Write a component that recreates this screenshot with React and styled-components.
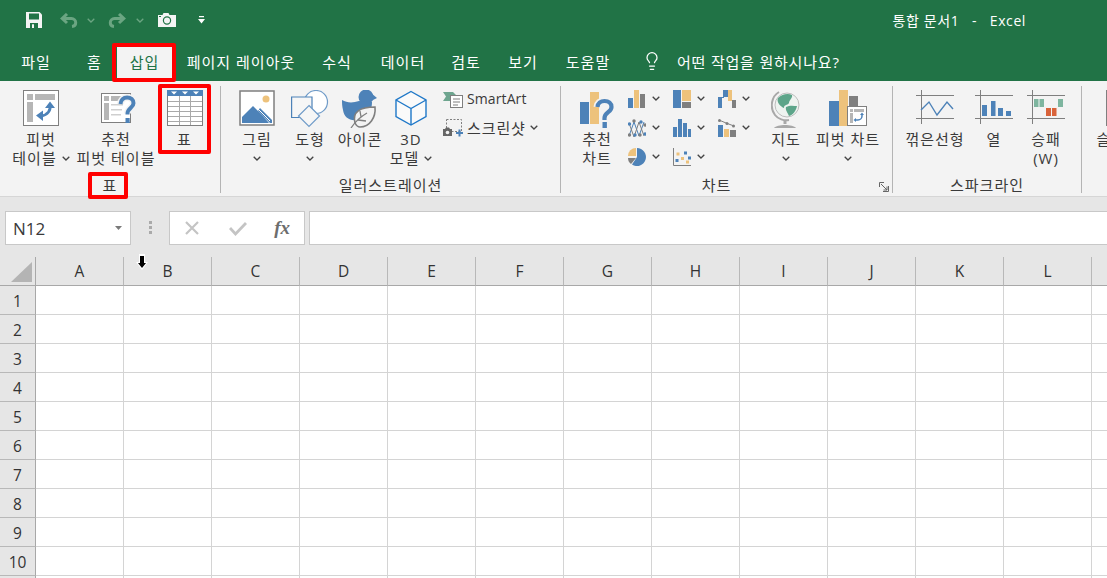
import React from "react";
import styled, { createGlobalStyle } from "styled-components";
import { Lightbulb } from "lucide-react";

const BLUE = "#4d82b8";
const YELLOW = "#edc27c";
const GRAY = "#7f7f7f";
const LIGHT = "#b6b6b6";

const GlobalStyle = createGlobalStyle`
  html, body {
    margin: 0;
    height: 100%;
    overflow: hidden;
    background: #fff;
  }
  * {
    box-sizing: border-box;
  }
  svg {
    display: block;
    flex: none;
  }
`;

const Page = styled.div`
  width: 1107px;
  height: 578px;
  overflow: hidden;
  font-family: "Open Sans", "Noto Sans CJK KR", sans-serif;
  color: #3a3a3a;
`;

const TitleBar = styled.div`
  height: 43px;
  background: #217346;
  display: flex;
  align-items: center;
  padding: 0 0 3px 26px;
  color: #fff;
`;

const QatSlot = styled.span`
  margin-left: ${props => props.$gap || 0}px;
`;

const WindowTitle = styled.div`
  margin-left: auto;
  margin-right: 81px;
  font-size: 14px;
  letter-spacing: 0.6px;
  white-space: pre;
`;

const TabBar = styled.div`
  height: 38px;
  background: #217346;
  display: flex;
  align-items: stretch;
`;

const Tab = styled.div`
  position: relative;
  width: ${props => props.$w}px;
  padding-bottom: 2px;
  display: flex;
  align-items: center;
  justify-content: center;
  font-size: 15px;
  letter-spacing: 1px;
  white-space: nowrap;
  color: ${props => (props.$active ? "#217346" : "#fff")};
  background: ${props => (props.$active ? "#f3f3f3" : "transparent")};
`;

const TellMe = styled.div`
  display: flex;
  align-items: center;
  color: #fff;
  font-size: 15px;
  letter-spacing: 0.8px;
  margin-left: 22px;
  padding-bottom: 2px;
  gap: 15px;
`;

const Mark = styled.span`
  position: absolute;
  border: 4px solid #ff0000;
  border-radius: 2px;
  pointer-events: none;
`;

const TabMark = styled(Mark)`
  top: 0;
  bottom: -1px;
  left: -5px;
  right: -4px;
`;

const ButtonMark = styled(Mark)`
  top: -6px;
  bottom: -5px;
  left: 0;
  right: 0;
`;

const LabelMark = styled(Mark)`
  top: -4px;
  bottom: -3px;
  left: 88px;
  width: 40px;
`;

const Ribbon = styled.div`
  height: 116px;
  background: #f3f3f3;
  border-bottom: 1px solid #d6d6d6;
  display: flex;
`;

const Group = styled.div`
  position: relative;
  width: ${props => props.$w}px;
  flex: none;
  display: flex;
  flex-direction: column;
`;

const GroupBody = styled.div`
  height: 95px;
  padding: 9px 0 0 ${props => props.$pad || 0}px;
  display: flex;
  align-items: flex-start;
`;

const GroupLabel = styled.div`
  position: relative;
  height: 20px;
  line-height: 19px;
  padding-right: ${props => props.$inset || 0}px;
  text-align: center;
  font-size: 15px;
  letter-spacing: 1px;
`;

const Separator = styled.div`
  width: 1px;
  height: 107px;
  flex: none;
  margin-top: 5px;
  background: #b4b4b4;
`;

const BigButton = styled.div`
  position: relative;
  width: ${props => props.$w}px;
  flex: none;
  margin-left: ${props => props.$gap || 0}px;
  display: flex;
  flex-direction: column;
  align-items: center;
`;

const IconSlot = styled.div`
  height: 36px;
  margin: 0 0 4px ${props => props.$shift || 0}px;
  display: flex;
  justify-content: center;
`;

const Line = styled.div`
  height: 19px;
  line-height: 19px;
  font-size: 15px;
  letter-spacing: 1px;
  white-space: nowrap;
  display: flex;
  align-items: center;
  gap: 5px;
`;

const SmallColumn = styled.div`
  margin: -6px 0 0 ${props => props.$gap || 0}px;
  flex: none;
`;

const SmallRow = styled.div`
  height: 29px;
  display: flex;
  align-items: center;
  gap: 4px;
  font-size: ${props => (props.$latin ? "14px" : "15px")};
  letter-spacing: ${props => (props.$latin ? "0.1px" : "0.9px")};
  white-space: nowrap;
`;

const ChartGrid = styled.div`
  margin: -6px 0 0 5px;
  display: grid;
  grid-template-columns: repeat(3, 45px);
  grid-auto-rows: 29px;
  flex: none;
`;

const ChartCell = styled.div`
  display: flex;
  align-items: center;
  gap: 6px;
`;

const Launcher = styled.svg`
  position: absolute;
  right: 3px;
  bottom: 4px;
`;

const FormulaBar = styled.div`
  height: 60px;
  background: #e6e6e6;
  padding: 14px 0 0 5px;
  display: flex;
  align-items: flex-start;
`;

const NameBox = styled.div`
  width: 126px;
  height: 34px;
  background: #fff;
  border: 1px solid #c8c8c8;
  display: flex;
  align-items: center;
  justify-content: space-between;
  padding: 0 8px 0 7px;
  font-size: 17px;
`;

const Grip = styled.div`
  width: 38px;
  height: 33px;
  display: flex;
  align-items: center;
  justify-content: center;
`;

const FormulaButtons = styled.div`
  width: 136px;
  height: 34px;
  background: #fff;
  border: 1px solid #c8c8c8;
  display: flex;
  align-items: center;
  justify-content: space-between;
  padding: 0 14px 0 13px;
`;

const FxLabel = styled.span`
  font-family: "Liberation Serif", serif;
  font-style: italic;
  font-weight: bold;
  font-size: 19px;
  color: #6d6d6d;
`;

const FormulaInput = styled.div`
  flex: 1;
  height: 34px;
  margin-left: 4px;
  background: #fff;
  border: 1px solid #c8c8c8;
  border-right: 0;
`;

const Sheet = styled.div`
  position: relative;
  display: grid;
  grid-template-columns: 36px repeat(12, 88px) 88px;
  grid-auto-rows: 29px;
  background: #fff;
`;

const Corner = styled.div`
  background: #e6e6e6;
  border-right: 1px solid #a8a8a8;
  border-bottom: 1px solid #a8a8a8;
  display: flex;
  align-items: flex-end;
  justify-content: flex-end;
  padding: 0 3px 3px 0;
`;

const ColumnHead = styled.div`
  background: #e6e6e6;
  border-right: 1px solid #b8b8b8;
  border-bottom: 1px solid #a8a8a8;
  display: flex;
  align-items: center;
  justify-content: center;
  font-size: 15.5px;
  color: #333;
`;

const RowHead = styled.div`
  background: #e6e6e6;
  border-right: 1px solid #a8a8a8;
  border-bottom: 1px solid #b8b8b8;
  padding-top: 1px;
  display: flex;
  align-items: center;
  justify-content: center;
  font-size: 15.5px;
  color: #333;
`;

const Cell = styled.div`
  border-right: 1px solid #d4d4d4;
  border-bottom: 1px solid #d4d4d4;
`;

const Pointer = styled.svg`
  position: absolute;
  left: 136px;
  top: -3px;
`;

const Chevron = ({ color = "#444" }) => (
  <svg width="8" height="5" viewBox="0 0 8 5">
    <path d="M.7.7 4 4 7.3.7" fill="none" stroke={color} strokeWidth="1.3" />
  </svg>
);

const SaveIcon = () => (
  <svg width="16" height="16" viewBox="0 0 16 16">
    <path d="M0 0h13.5L16 2.5V16H0z" fill="#f4f4f4" />
    <path d="M3 1.5h10v6H3z" fill="#217346" />
    <path d="M4 11h8v5H4z" fill="#217346" />
    <path d="M6 12.2h2V16H6z" fill="#f4f4f4" />
  </svg>
);

const UndoIcon = ({ flip }) => (
  <svg width="18" height="15" viewBox="0 0 18 15">
    <g transform={flip ? "translate(18 0) scale(-1 1)" : undefined}>
      <path
        d="M7 1 2.200 5.500 7 10M2.200 5.500h9.300a4.200 4.200 0 0 1 4.200 4.200c0 2-1.500 3.600-3.700 3.800"
        fill="none"
        stroke="#6ba582"
        strokeWidth="3"
      />
    </g>
  </svg>
);

const CameraIcon = () => (
  <svg width="18" height="14" viewBox="0 0 18 14">
    <path d="M0 2h4.500l1-2h5l1 2H18v12H0z" fill="#f4f4f4" />
    <circle cx="9" cy="7.500" r="3.600" fill="none" stroke="#217346" strokeWidth="1.200" />
    <path d="M1 3h2v1H1z" fill="#217346" />
  </svg>
);

const CustomizeIcon = () => (
  <svg width="7" height="8" viewBox="0 0 7 8">
    <path d="M1 0h5v1.200H1zM0 3h7L3.500 7.500z" fill="#fff" />
  </svg>
);

const PivotIcon = () => (
  <svg width="36" height="36" viewBox="0 0 36 36">
    <rect x="0.500" y="0.500" width="35" height="35" fill="#fff" stroke={GRAY} />
    <path d="M4 4h6v6H4zM12 4h20v6H12zM4 12h6v20H4z" fill={LIGHT} />
    <path
      d="M27 15c1 5-2 10-9 11"
      fill="none"
      stroke={BLUE}
      strokeWidth="2.800"
    />
    <path d="M22 18l5-6.500 5 6.500zM20 20.500l-7 5 7 5.500z" fill={BLUE} />
  </svg>
);

const RecommendPivotIcon = () => (
  <svg width="36" height="36" viewBox="0 0 36 36">
    <rect x="0.500" y="3.500" width="29" height="29" fill="#fff" stroke={GRAY} />
    <path d="M3 6h5v5H3zM10 6h17v5H10zM3 13h5v17H3z" fill={LIGHT} />
    <path d="M10 14h12v1.500H10zM10 19h11v1.500H10zM10 24h10v1.500H10z" fill="#cfcfcf" />
    <path
      d="M19.500 14c.3-4 3-6.500 6.600-6.500 3.800 0 6.400 2.300 6.400 5.700 0 4.800-6 5-6 10.300"
      fill="none"
      stroke="#f3f3f3"
      strokeWidth="7"
    />
    <path
      d="M19.500 14c.3-4 3-6.500 6.600-6.500 3.800 0 6.400 2.300 6.400 5.700 0 4.800-6 5-6 10.300v1"
      fill="none"
      stroke={BLUE}
      strokeWidth="4"
    />
    <path d="M24.500 28h4.200v5h-4.200z" fill={BLUE} />
  </svg>
);

const TableIcon = () => (
  <svg width="36" height="36" viewBox="0 0 36 36">
    <rect x="0.500" y="0.500" width="35" height="35" fill="#fff" stroke={GRAY} />
    <path d="M0 0h36v6H0z" fill={BLUE} />
    <path d="M4 1.500h6l-3 3zM15 1.500h6l-3 3zM26 1.500h6l-3 3z" fill="#fff" />
    <path
      d="M12.500 6v29M23.500 6v29M1 11.500h34M1 16.500h34M1 21.500h34M1 26.500h34M1 31.500h34"
      stroke="#a9a9a9"
      fill="none"
    />
  </svg>
);

const PictureIcon = () => (
  <svg width="36" height="36" viewBox="0 0 36 36">
    <rect x="1" y="1" width="34" height="34" fill="#fff" stroke={GRAY} strokeWidth="1.500" />
    <circle cx="27" cy="9" r="3.500" fill={YELLOW} />
    <path d="M3 33V27L14 16l10 10 6 7z" fill={BLUE} />
    <path d="M21 18l12 12v3h-2L19 21z" fill={BLUE} />
    <path d="M17.500 17.500 31 31" stroke="#fff" strokeWidth="1" />
  </svg>
);

const ShapesIcon = () => (
  <svg width="38" height="38" viewBox="0 0 38 38">
    <circle cx="25" cy="12" r="11.500" fill="#fff" stroke="#6f9bc8" strokeWidth="1.200" />
    <path d="M.6 7H21v20.500H.6z" fill="#f6f6f6" stroke={BLUE} strokeWidth="1.200" />
    <path d="M18 15.500 28.500 26 18 36.500 7.500 26z" fill="#f6f6f6" stroke="#6f9bc8" strokeWidth="1.200" />
  </svg>
);

const DuckIcon = () => (
  <svg width="36" height="38" viewBox="0 0 36 38">
    <circle cx="24" cy="7" r="7.500" fill={BLUE} />
    <path d="M29 3l6 5-6 3z" fill={BLUE} />
    <path
      d="M0 10c5 3 11 3 17 1l13 1c0 6-2 10-6 13l-9 5C7 31 2 27 1 20 0 16 0 13 0 10z"
      fill={BLUE}
    />
    <path
      d="M13 33C10 22 18 17 33 17c1 10-5 20-15 20-3 0-4-2-5-4z"
      fill="#f3f3f3"
      stroke={GRAY}
      strokeWidth="1.600"
    />
    <path d="M9 38c4-6 9-11 16-15M16 30l8 1M19 27l-1-6" fill="none" stroke={GRAY} strokeWidth="1.300" />
  </svg>
);

const CubeIcon = () => (
  <svg width="32" height="36" viewBox="0 0 32 36">
    <path d="M16 1.500 31 10v16.500L16 35 1 26.500V10z" fill="#fafafa" stroke="#1f78c8" strokeWidth="1.400" />
    <path d="M1 10l15 8.500L31 10M16 18.500V35" fill="none" stroke="#1f78c8" strokeWidth="1.400" />
  </svg>
);

const SmartArtIcon = () => (
  <svg width="20" height="18" viewBox="0 0 20 18">
    <path d="M0 2h10l3 3-3 3 3 3H0l3-4.500z" fill="#6ea58f" />
    <rect x="7.500" y="5.500" width="12" height="12" fill="#fff" stroke={GRAY} />
    <path d="M10 9h7M10 12h7M10 15h5" stroke={GRAY} />
  </svg>
);

const ScreenshotIcon = () => (
  <svg width="20" height="18" viewBox="0 0 20 18">
    <rect x="3.500" y="0.500" width="15" height="12" fill="none" stroke={GRAY} strokeDasharray="2 1.500" />
    <path d="M0 10h2l1-1.500h3l1 1.500h2v7H0z" fill="#666" />
    <circle cx="4.500" cy="13.500" r="1.800" fill="#f3f3f3" />
    <path d="M13 14h7M16.500 10.500v7" stroke={BLUE} strokeWidth="2" />
  </svg>
);

const RecommendChartIcon = () => (
  <svg width="36" height="40" viewBox="0 0 36 40">
    <path d="M1 12h9v22H1z" fill={BLUE} />
    <path d="M11 2h9v32h-9z" fill={YELLOW} />
    <path d="M21 8h9v3h-9z" fill={GRAY} />
    <path
      d="M18.500 17c.3-3.500 3-6 7-6 4.200 0 7 2.500 7 6 0 5.200-7 5.200-7 11"
      fill="none"
      stroke="#f3f3f3"
      strokeWidth="8"
    />
    <path
      d="M18.500 17c.3-3.500 3-6 7-6 4.200 0 7 2.500 7 6 0 5.200-7 5.200-7 11v2"
      fill="none"
      stroke={BLUE}
      strokeWidth="4.200"
    />
    <path d="M23.500 32h4.400v6h-4.400z" fill={BLUE} />
  </svg>
);

const small = children => (
  <svg width="18" height="18" viewBox="0 0 18 18">
    {children}
  </svg>
);

const BarsIcon = () =>
  small(
    <>
      <path d="M0 8h5v10H0z" fill={BLUE} />
      <path d="M6 0h5v18H6z" fill={YELLOW} />
      <path d="M12 4h5v14h-5z" fill={GRAY} />
    </>
  );

const TreemapIcon = () =>
  small(
    <>
      <path d="M0 0h8v18H0z" fill={BLUE} />
      <path d="M9 0h9v11H9z" fill={YELLOW} />
      <path d="M9 12h9v6H9z" fill={GRAY} />
    </>
  );

const WaterfallIcon = () =>
  small(
    <>
      <path d="M0 7h4v11H0z" fill={BLUE} />
      <path d="M0 7h5V0h1v8H0z" fill={BLUE} />
      <path d="M5 0h5v7H5z" fill={BLUE} />
      <path d="M10 0h4v11h-4z" fill={YELLOW} />
      <path d="M14 10h4v8h-4z" fill={GRAY} />
    </>
  );

const StatsIcon = () =>
  small(
    <>
      <path d="M1 17 6 3l5 14 5-14" fill="none" stroke={BLUE} strokeWidth="1" />
      <path d="M1 4l5 14 5-15 5 14" fill="none" stroke={GRAY} strokeWidth="1" />
      <circle cx="1.500" cy="5" r="1.700" fill={BLUE} />
      <circle cx="6" cy="2" r="1.700" fill={GRAY} />
      <circle cx="13" cy="3" r="1.700" fill={BLUE} />
      <circle cx="17" cy="6" r="1.700" fill={GRAY} />
      <circle cx="1.500" cy="16" r="1.700" fill={GRAY} />
      <circle cx="7" cy="16" r="1.700" fill={BLUE} />
      <circle cx="12" cy="16" r="1.700" fill={GRAY} />
      <circle cx="17" cy="15" r="1.700" fill={BLUE} />
    </>
  );

const HistogramIcon = () =>
  small(
    <>
      <path d="M0 8h4v10H0zM5 0h4v18H5zM10 4h4v14h-4zM15 10h3v8h-3z" fill={BLUE} />
    </>
  );

const ComboIcon = () =>
  small(
    <>
      <path d="M0 6h5v12H0z" fill={BLUE} />
      <path d="M6 10h5v8H6z" fill={YELLOW} />
      <path d="M12 11h6v7h-6z" fill={GRAY} />
      <path d="M1 1l7 3 8 3" fill="none" stroke={GRAY} strokeWidth="1" />
      <circle cx="1.500" cy="1.500" r="1.500" fill={GRAY} />
      <circle cx="9" cy="4.500" r="1.500" fill={GRAY} />
      <circle cx="15.500" cy="7" r="1.500" fill={GRAY} />
    </>
  );

const PieIcon = () =>
  small(
    <>
      <path d="M9 0a9 9 0 1 1-5 16.500L9 9z" fill={BLUE} />
      <path d="M8 0v8H0a8 8 0 0 1 8-8z" fill={YELLOW} />
      <path d="M0 10h8l-5 6c-2-1.500-3-3.500-3-6z" fill={GRAY} />
    </>
  );

const ScatterIcon = () =>
  small(
    <>
      <path d="M.5 0v17.500H18" fill="none" stroke={GRAY} />
      <path d="M11 3.500h3v3h-3zM2.500 11h3v3h-3zM15 8.500h3v3h-3z" fill={BLUE} />
      <path d="M3.500 4.500h3v3h-3zM8 9h3v3H8zM13 12.500h3v3h-3z" fill={YELLOW} />
    </>
  );

const GlobeIcon = () => (
  <svg width="30" height="38" viewBox="0 0 30 38">
    <path d="M8 2C1 6-2 17 4 25c3 4 9 6 14 5" fill="none" stroke="#a8a8a8" strokeWidth="2" />
    <circle cx="16" cy="15" r="12" fill="#eef3f0" stroke="#bdbdbd" />
    <path d="M7 8c4-4 10-5 14-3 1 3-3 5-3 8-2 3-5 1-5 5-3-1-8-6-6-10z" fill="#5da58a" />
    <path d="M15 17c4-2 8-1 11-1-1 5-4 9-8 10-1-3-4-6-3-9z" fill="#5da58a" />
    <path d="M14 30v4" stroke="#a8a8a8" strokeWidth="3" />
    <path d="M3 38c3-4 19-4 22 0z" fill="#a8a8a8" />
  </svg>
);

const PivotChartIcon = () => (
  <svg width="38" height="36" viewBox="0 0 38 36">
    <path d="M0 11h10v25H0z" fill={BLUE} />
    <path d="M10 0h9v36h-9z" fill={YELLOW} />
    <path d="M20 6h9v11h-9z" fill={GRAY} />
    <rect x="18.500" y="16.500" width="19" height="19" fill="#fff" stroke={GRAY} />
    <path d="M21 19h3v3h-3zM25 19h10v3H25zM21 23h3v10h-3z" fill={LIGHT} />
    <path d="M33 24v2a4 4 0 0 1-4 4h-2" fill="none" stroke={BLUE} strokeWidth="1.500" />
    <path d="M31 25l2-2.500L35 25zM27 28l-2.500 2 2.500 2z" fill={BLUE} />
  </svg>
);

const Axes = () => (
  <path
    d="M0 5.500h38M0 28.500h38M5.500 0v34"
    fill="none"
    stroke={GRAY}
    strokeWidth="1"
  />
);

const SparkLineIcon = () => (
  <svg width="38" height="34" viewBox="0 0 38 34">
    <Axes />
    <path d="M5 20l8-8 8 13 10-13 6 7" fill="none" stroke={BLUE} strokeWidth="1.400" />
  </svg>
);

const SparkColumnIcon = () => (
  <svg width="38" height="34" viewBox="0 0 38 34">
    <Axes />
    <path d="M7 15h5v11H7zM16 11h4.500v15H16zM23 18h5v8h-5zM31 21h5v5h-5z" fill={BLUE} />
  </svg>
);

const SparkWinLossIcon = () => (
  <svg width="38" height="34" viewBox="0 0 38 34">
    <Axes />
    <path d="M7 9h4.500v8H7zM12.500 9H17v8h-4.500zM31 9h5v8h-5z" fill="#7eb59f" />
    <path d="M19 18h5v8h-5zM25 18h4.500v8H25z" fill="#d9633a" />
  </svg>
);

const SlicerIcon = () => (
  <svg width="36" height="36" viewBox="0 0 36 36">
    <rect x="0.500" y="0.500" width="35" height="35" fill="#fff" stroke={GRAY} />
  </svg>
);

const Letters = ["A", "B", "C", "D", "E", "F", "G", "H", "I", "J", "K", "L", ""];
const Rows = [1, 2, 3, 4, 5, 6, 7, 8, 9, 10];

const Tabs = [
  { label: "파일", w: 72 },
  { label: "홈", w: 45 },
  { label: "삽입", w: 55, active: true },
  { label: "페이지 레이아웃", w: 138 },
  { label: "수식", w: 54 },
  { label: "데이터", w: 78 },
  { label: "검토", w: 48 },
  { label: "보기", w: 66 },
  { label: "도움말", w: 64 }
];

const ChartItems = [
  BarsIcon,
  TreemapIcon,
  WaterfallIcon,
  StatsIcon,
  HistogramIcon,
  ComboIcon,
  PieIcon,
  ScatterIcon
];

const Big = ({ w, gap, shift, icon, lines, children }) => (
  <BigButton $w={w} $gap={gap}>
    <IconSlot $shift={shift}>{icon}</IconSlot>
    {lines.map((line, i) => (
      <Line key={i}>{line}</Line>
    ))}
    {children}
  </BigButton>
);

const App = () => {
  return (
    <Page>
      <GlobalStyle />
      <TitleBar>
        <QatSlot><SaveIcon /></QatSlot>
        <QatSlot $gap={18}><UndoIcon /></QatSlot>
        <QatSlot $gap={9}><Chevron color="#6ba582" /></QatSlot>
        <QatSlot $gap={13}><UndoIcon flip /></QatSlot>
        <QatSlot $gap={10}><Chevron color="#6ba582" /></QatSlot>
        <QatSlot $gap={14}><CameraIcon /></QatSlot>
        <QatSlot $gap={22}><CustomizeIcon /></QatSlot>
        <WindowTitle>통합 문서1   -   Excel</WindowTitle>
      </TitleBar>

      <TabBar>
        {Tabs.map(tab => (
          <Tab key={tab.label} $w={tab.w} $active={tab.active}>
            {tab.label}
            {tab.active && <TabMark />}
          </Tab>
        ))}
        <TellMe>
          <Lightbulb size={20} strokeWidth={1.5} />
          어떤 작업을 원하시나요?
        </TellMe>
      </TabBar>

      <Ribbon>
        <Group $w={220}>
          <GroupBody $pad={8}>
            <Big w={66} icon={<PivotIcon />} lines={["피벗", <>테이블 <Chevron /></>]} />
            <Big w={84} shift={6} icon={<RecommendPivotIcon />} lines={["추천", "피벗 테이블"]} />
            <Big w={53} icon={<TableIcon />} lines={["표"]}>
              <ButtonMark />
            </Big>
          </GroupBody>
          <GroupLabel>
            표
            <LabelMark />
          </GroupLabel>
        </Group>
        <Separator />

        <Group $w={339}>
          <GroupBody $pad={10}>
            <Big w={52} icon={<PictureIcon />} lines={["그림", <Chevron />]} />
            <Big w={54} icon={<ShapesIcon />} lines={["도형", <Chevron />]} />
            <Big w={46} icon={<DuckIcon />} lines={["아이콘"]} />
            <Big w={56} icon={<CubeIcon />} lines={["3D", <>모델 <Chevron /></>]} />
            <SmallColumn $gap={4}>
              <SmallRow $latin><SmartArtIcon />SmartArt</SmallRow>
              <SmallRow><ScreenshotIcon />스크린샷 <Chevron /></SmallRow>
            </SmallColumn>
          </GroupBody>
          <GroupLabel>일러스트레이션</GroupLabel>
        </Group>
        <Separator />

        <Group $w={331}>
          <GroupBody $pad={10}>
            <Big w={52} icon={<RecommendChartIcon />} lines={["추천", "차트"]} />
            <ChartGrid>
              {ChartItems.map((Item, i) => (
                <ChartCell key={i}>
                  <Item />
                  <Chevron />
                </ChartCell>
              ))}
            </ChartGrid>
            <Big w={46} icon={<GlobeIcon />} lines={["지도", <Chevron />]} />
            <Big w={78} icon={<PivotChartIcon />} lines={["피벗 차트", <Chevron />]} />
          </GroupBody>
          <GroupLabel $inset={20}>차트</GroupLabel>
          <Launcher width="10" height="10" viewBox="0 0 10 10">
            <path d="M.5 5V.5H5M9.500 4v5.500H4M2 2l6 6M8 4.500V8H4.500" fill="none" stroke="#666" />
          </Launcher>
        </Group>
        <Separator />

        <Group $w={188}>
          <GroupBody $pad={10}>
            <Big w={64} icon={<SparkLineIcon />} lines={["꺾은선형"]} />
            <Big w={54} icon={<SparkColumnIcon />} lines={["열"]} />
            <Big w={50} icon={<SparkWinLossIcon />} lines={["승패", "(W)"]} />
          </GroupBody>
          <GroupLabel>스파크라인</GroupLabel>
        </Group>
        <Separator />

        <Group $w={80}>
          <GroupBody $pad={14}>
            <Big w={60} shift={-4} icon={<SlicerIcon />} lines={["슬라이서"]} />
          </GroupBody>
        </Group>
      </Ribbon>

      <FormulaBar>
        <NameBox>
          N12
          <svg width="7" height="4" viewBox="0 0 7 4">
            <path d="M0 0h7L3.500 4z" fill="#7a7a7a" />
          </svg>
        </NameBox>
        <Grip>
          <svg width="3" height="13" viewBox="0 0 3 13">
            <path d="M0 0h3v3H0zM0 5h3v3H0zM0 10h3v3H0z" fill="#aaa" />
          </svg>
        </Grip>
        <FormulaButtons>
          <svg width="18" height="18" viewBox="0 0 18 18">
            <path d="M3 3l12 12M15 3 3 15" stroke="#c4c4c4" strokeWidth="2.200" fill="none" />
          </svg>
          <svg width="18" height="18" viewBox="0 0 18 18">
            <path d="M1 9l5.500 6L17 4" stroke="#c4c4c4" strokeWidth="2.800" fill="none" />
          </svg>
          <FxLabel>fx</FxLabel>
        </FormulaButtons>
        <FormulaInput />
      </FormulaBar>

      <Sheet>
        <Corner>
          <svg width="21" height="20" viewBox="0 0 21 20">
            <path d="M21 0v20H0z" fill="#b4b4b4" />
          </svg>
        </Corner>
        {Letters.map((letter, i) => (
          <ColumnHead key={i}>{letter}</ColumnHead>
        ))}
        {Rows.map(row => (
          <React.Fragment key={row}>
            <RowHead>{row}</RowHead>
            {Letters.map((_, i) => (
              <Cell key={i} />
            ))}
          </React.Fragment>
        ))}
        <RowHead />
        {Letters.map((_, i) => (
          <Cell key={i} />
        ))}
        <Pointer width="12" height="16" viewBox="0 0 12 16">
          <path d="M3 0h6v8h3l-6 8-6-8h3z" fill="#fff" />
          <path d="M4 2h4v7h2l-4 5-4-5h2z" fill="#000" />
        </Pointer>
      </Sheet>
    </Page>
  );
};

export default App;
